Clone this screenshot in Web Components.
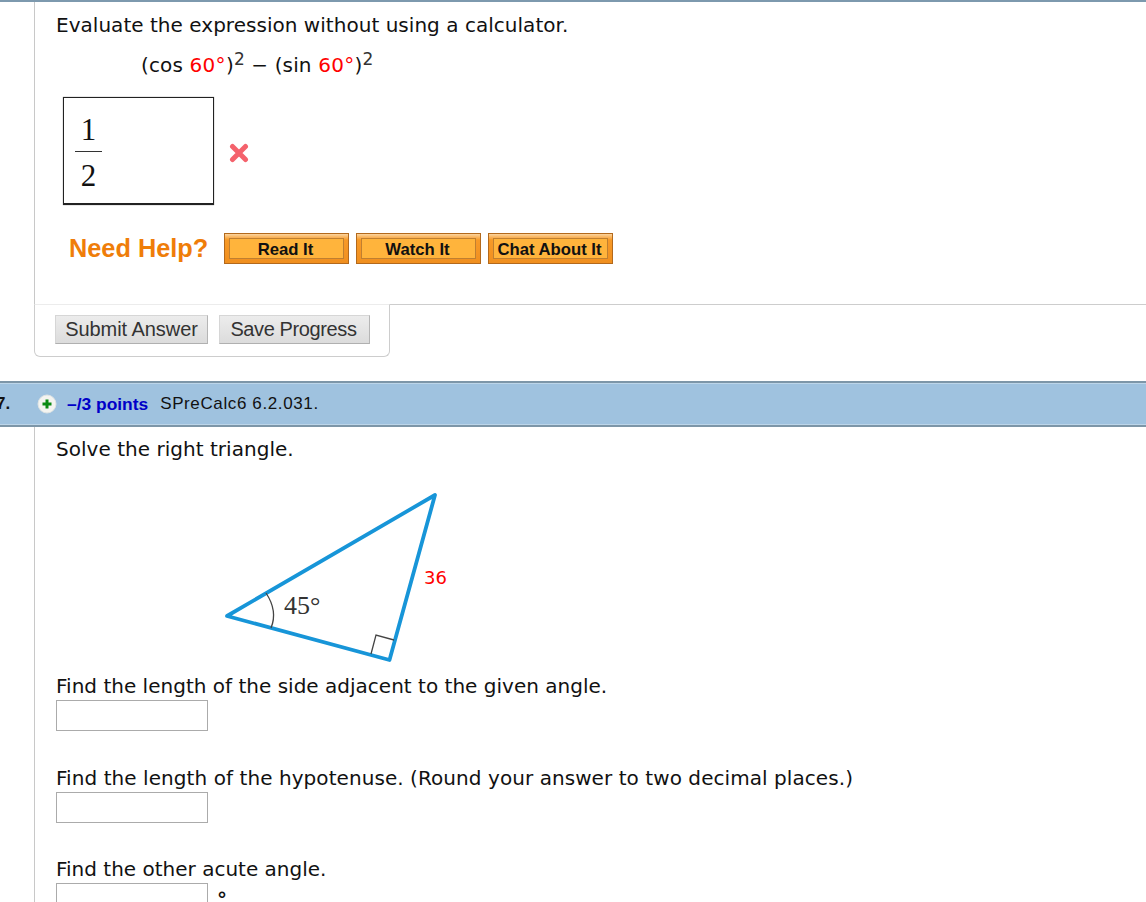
<!DOCTYPE html>
<html>
<head>
<meta charset="utf-8">
<title>Questions</title>
<style>
	html, body { margin: 0; padding: 0; background: #fff; }
	body {
		height: 900px;
		overflow: hidden;
		border-top: 2px solid #7d99ae;
		font-family: "DejaVu Sans", sans-serif;
		color: #000;
	}
</style>
</head>
<body>
<question-body top>
	<prompt-line>Evaluate the expression without using a calculator.</prompt-line>
	<div style="height:16px"></div>
	<math-expr></math-expr>
	<fraction-answer></fraction-answer>
	<help-bar></help-bar>
</question-body>
<action-tab></action-tab>
<question-header number="7." points="–/3 points" code="SPreCalc6 6.2.031."></question-header>
<question-body>
	<prompt-line style="padding-top:10px">Solve the right triangle.</prompt-line>
	<triangle-figure></triangle-figure>
	<answer-field style="letter-spacing:.01px" label="Find the length of the side adjacent to the given angle."></answer-field>
	<answer-field style="height:91px;letter-spacing:.065px" label="Find the length of the hypotenuse. (Round your answer to two decimal places.)"></answer-field>
	<answer-field style="letter-spacing:0" label="Find the other acute angle." unit="°"></answer-field>
</question-body>

<script>
const sheet = (css) => `<style>${css}</style>`;

customElements.define('question-body', class extends HTMLElement {
	constructor() {
		super();
		this.attachShadow({ mode: 'open' }).innerHTML = sheet(`
			:host {
				display: block;
				margin-left: 34px;
				padding-left: 21px;
				border-left: 1px solid #c8c8c8;
			}
			:host([top]) {
				height: 302px;
			}
		`) + '<slot></slot>';
	}
});

customElements.define('prompt-line', class extends HTMLElement {
	constructor() {
		super();
		this.attachShadow({ mode: 'open' }).innerHTML = sheet(`
			:host {
				display: block;
				padding-top: 11px;
				font-size: 20px;
				line-height: 24px;
				letter-spacing: .03px;
				color: #111;
			}
		`) + '<slot></slot>';
	}
});

customElements.define('math-expr', class extends HTMLElement {
	constructor() {
		super();
		this.attachShadow({ mode: 'open' }).innerHTML = sheet(`
			:host {
				display: block;
				padding-left: 85px;
				font-size: 20px;
				line-height: 24px;
				letter-spacing: .15px;
				color: #111;
				white-space: pre;
			}
			.red { color: #f00; letter-spacing: .3px; }
			sup { font-size: 17px; line-height: 0; vertical-align: 7px; color: #333; letter-spacing: 0; }
			.minus { margin: 0 6.5px; }
		`) + `(cos <span class="red">60°</span>)<sup>2</sup><span class="minus">−</span>(sin <span class="red">60°</span>)<sup>2</sup>`;
	}
});

customElements.define('fraction-answer', class extends HTMLElement {
	constructor() {
		super();
		this.attachShadow({ mode: 'open' }).innerHTML = sheet(`
			:host {
				display: flex;
				align-items: center;
				gap: 15px;
				margin: 20px 0 0 7px;
			}
			.box {
				box-sizing: border-box;
				width: 151px;
				height: 108px;
				padding: 3px 0 0 11px;
				border: 1px solid #222;
				border-bottom-width: 2px;
				box-shadow: 0 0 1px #777;
				display: flex;
				align-items: center;
			}
			.frac {
				width: 27px;
				text-align: center;
				font: 31px/44px "Liberation Serif", serif;
				color: #111;
			}
			.frac div:first-child { position: relative; top: 1px; }
			.frac div + div { border-top: 1px solid #333; padding-top: 2px; }
			svg { display: block; margin-top: 3px; }
		`) + `
			<div class="box"><div class="frac"><div>1</div><div>2</div></div></div>
			<svg width="20" height="20" viewBox="0 0 20 20">
				<path d="M3.5 3.5 16.5 16.5M16.5 3.5 3.5 16.5" stroke="#f4626c" stroke-width="5" stroke-linecap="round"/>
			</svg>
		`;
	}
});

const helpTemplate = document.createElement('template');
helpTemplate.innerHTML = sheet(`
	:host {
		display: flex;
		align-items: center;
		margin: 28px 0 0 13px;
		font-family: "Liberation Sans", sans-serif;
	}
	.title {
		width: 155px;
		color: #ef7d09;
		font-size: 25.3px;
		font-weight: bold;
		line-height: 31px;
		white-space: nowrap;
	}
	.btn + .btn { margin-left: 7px; }
	.btn {
		box-sizing: border-box;
		width: 125px;
		height: 31px;
		padding: 4px;
		border: 1px solid #b3691c;
		background: linear-gradient(#fbd49f, #f79a28 20%, #f08f1f);
	}
	.btn span {
		display: block;
		height: 100%;
		box-sizing: border-box;
		padding-right: 2px;
		border: 1px solid #c07f30;
		background: #ffb43c;
		color: #111;
		font-size: 16.7px;
		font-weight: bold;
		line-height: 21px;
		text-align: center;
		white-space: nowrap;
	}
`) + `
	<div class="title">Need Help?</div>
	<div class="btn"><span>Read It</span></div>
	<div class="btn"><span>Watch It</span></div>
	<div class="btn"><span>Chat About It</span></div>
`;

customElements.define('help-bar', class extends HTMLElement {
	constructor() {
		super();
		this.attachShadow({ mode: 'open' }).appendChild(helpTemplate.content.cloneNode(true));
	}
});

customElements.define('action-tab', class extends HTMLElement {
	constructor() {
		super();
		this.attachShadow({ mode: 'open' }).innerHTML = sheet(`
			:host {
				display: flex;
				margin-left: 34px;
				font-family: "Liberation Sans", sans-serif;
			}
			.tab {
				box-sizing: border-box;
				width: 356px;
				height: 53px;
				padding: 10px 0 0 20px;
				display: flex;
				gap: 11px;
				align-items: flex-start;
				border: 1px solid #cdcdcd;
				border-top-color: #ececec;
				border-radius: 0 0 6px 6px;
			}
			.rest { flex: 1; border-top: 1px solid #cdcdcd; }
			button {
				box-sizing: border-box;
				height: 29px;
				padding: 0;
				border: 1px solid #b5b5b5;
				border-color: #d6d6d6 #b5b5b5 #b0b0b0 #d6d6d6;
				border-radius: 0;
				background: linear-gradient(#ececec, #dcdcdc);
				color: #333;
				font: 20px/27px "Liberation Sans", sans-serif;
				white-space: nowrap;
			}
		`) + `
			<div class="tab">
				<button style="width:153px;letter-spacing:-.05px">Submit Answer</button>
				<button style="width:151px;padding-right:2px;letter-spacing:-.38px">Save Progress</button>
			</div>
			<div class="rest"></div>
		`;
	}
});

customElements.define('question-header', class extends HTMLElement {
	constructor() {
		super();
		const root = this.attachShadow({ mode: 'open' });
		root.innerHTML = sheet(`
			:host {
				box-sizing: border-box;
				display: flex;
				align-items: center;
				height: 46px;
				margin-top: 24px;
				border-top: 2px solid #7d96a8;
				border-bottom: 2px solid #7d96a8;
				background: #9fc2df;
				box-shadow: inset 0 1px 0 #bcd5e9, inset 0 -1px 0 #bcd5e9;
				font: 17px "Liberation Sans", sans-serif;
				color: #111;
				white-space: nowrap;
			}
			.num { width: 41px; margin-left: -4px; font-weight: bold; }
			svg { display: block; margin-right: 10px; }
			.pts { color: #0000c8; font-weight: bold; font-size: 17.4px; margin-right: 12px; }
			.code { letter-spacing: .62px; }
		`) + `
			<span class="num"></span>
			<svg width="20" height="20" viewBox="0 0 20 20">
				<circle cx="10" cy="10" r="9" fill="#f4f4f0" stroke="#dfe4e4"/>
				<path d="M10 5.5v9M5.5 10h9" stroke="#0a8a12" stroke-width="3"/>
			</svg>
			<span class="pts"></span>
			<span class="code"></span>
		`;
		root.querySelector('.num').textContent = this.getAttribute('number');
		root.querySelector('.pts').textContent = this.getAttribute('points');
		root.querySelector('.code').textContent = this.getAttribute('code');
	}
});

customElements.define('triangle-figure', class extends HTMLElement {
	constructor() {
		super();
		this.attachShadow({ mode: 'open' }).innerHTML = sheet(`
			:host { display: block; height: 193px; margin: 20px 0 0 144px; }
			svg { display: block; }
			.angle { font: 26px "Liberation Serif", serif; fill: #333; }
			.side { font: 18px "DejaVu Sans", sans-serif; fill: #f00; }
		`) + `
			<svg width="260" height="190" viewBox="0 0 260 190">
				<path d="M27 135 235 14 189.5 179Z" fill="none" stroke="#1795d8" stroke-width="3.8" stroke-linejoin="round"/>
				<path d="M66 112Q78 130 71 147" fill="none" stroke="#444" stroke-width="1.3"/>
				<path d="M171 173 176 154 194 159" fill="none" stroke="#444" stroke-width="1.3"/>
				<text class="angle" x="84" y="133">45°</text>
				<text class="side" x="224" y="103">36</text>
			</svg>
		`;
	}
});

customElements.define('answer-field', class extends HTMLElement {
	constructor() {
		super();
		const root = this.attachShadow({ mode: 'open' });
		root.innerHTML = sheet(`
			:host {
				display: block;
				height: 92px;
				font-size: 20px;
				line-height: 24px;
				color: #111;
			}
			.label { height: 26px; white-space: nowrap; }
			.row { display: flex; align-items: flex-start; }
			.input {
				box-sizing: border-box;
				width: 152px;
				height: 31px;
				border: 1px solid #ababab;
				background: #fff;
			}
			.unit { margin-left: 9px; padding-top: 5px; line-height: 22px; font-weight: bold; }
		`) + `
			<div class="label"></div>
			<div class="row"><div class="input"></div><span class="unit"></span></div>
		`;
		root.querySelector('.label').textContent = this.getAttribute('label');
		root.querySelector('.unit').textContent = this.getAttribute('unit') || '';
	}
});
</script>
</body>
</html>
